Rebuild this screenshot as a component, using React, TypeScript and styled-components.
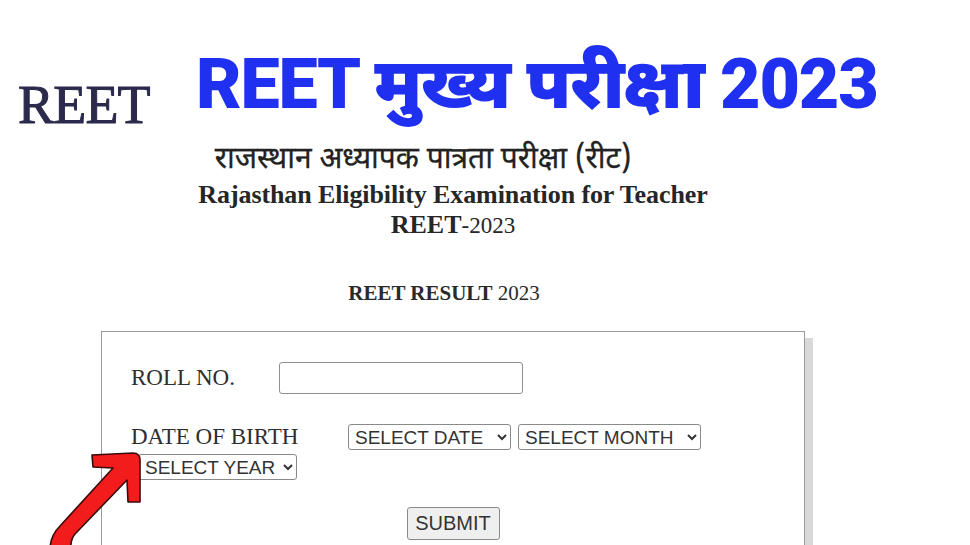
import React from "react";
import styled, { createGlobalStyle } from "styled-components";

const GlobalStyle = createGlobalStyle`
  html, body {
    margin: 0;
    padding: 0;
    background: #ffffff;
  }
  #root {
    width: 970px;
    height: 545px;
    overflow: hidden;
  }
`;

const Page = styled.div`
  position: relative;
  width: 970px;
  height: 545px;
  overflow: hidden;
  background: #fff;
`;

const Header = styled.header`
  display: flex;
  align-items: center;
  box-sizing: border-box;
  height: 140px;
  padding: 40px 0 0 18px;
`;

const Logo = styled.div`
  width: 178px;
  font-family: "Liberation Serif", serif;
  font-size: 54px;
  color: #2b2a4c;
  -webkit-text-stroke: 1px #2b2a4c;
  letter-spacing: -0.8px;
  padding-top: 30px;
`;

const Title = styled.h1`
  margin: 0;
  font-family: Roboto, "Noto Sans Devanagari", "Noto Sans", sans-serif;
  font-weight: 900;
  font-size: 70px;
  letter-spacing: -1.2px;
  color: #1f30f0;
  white-space: nowrap;
`;

const Intro = styled.div`
  width: 704px;
  margin-left: 101px;
  display: flex;
  flex-direction: column;
  align-items: center;
`;

const HindiLine = styled.div`
  margin: 2px 60px 0 0;
  font-family: "Noto Sans Devanagari", "Noto Sans", sans-serif;
  font-size: 30px;
  line-height: 38px;
  color: #222;
  -webkit-text-stroke: 0.3px #222;
`;

const EnglishLine = styled.div`
  margin-top: 1px;
  font-family: "Liberation Serif", serif;
  font-weight: bold;
  font-size: 26px;
  line-height: 28px;
  letter-spacing: -0.1px;
  color: #262626;
`;

const YearLine = styled.div`
  font-family: "Liberation Serif", serif;
  font-size: 26px;
  line-height: 32px;
  color: #262626;
  & > b {
    font-weight: bold;
  }
  & > span {
    font-size: 23px;
  }
`;

const ResultHeading = styled.div`
  margin: 39px 18px 0 0;
  font-family: "Liberation Serif", serif;
  font-size: 21px;
  color: #2a2a2a;
  & > b {
    font-weight: bold;
  }
`;

const FormBox = styled.form`
  margin: 25px 0 0 101px;
  width: 704px;
  min-height: 260px;
  border: 1px solid #9a9a9a;
  box-shadow: 8px 7px 0 #d9d9d9;
  padding: 30px 0 0 29px;
  box-sizing: border-box;
`;

const Row = styled.div<{ $gap?: number }>`
  display: flex;
  flex-wrap: wrap;
  align-items: center;
  column-gap: 7px;
  row-gap: 4px;
  margin-bottom: ${(p) => p.$gap ?? 0}px;
`;

const Label = styled.label<{ $width: number }>`
  width: ${(p) => p.$width}px;
  font-family: "Liberation Serif", serif;
  font-size: 23px;
  color: #2e2e2e;
  margin-right: -7px;
`;

const TextInput = styled.input`
  width: 244px;
  height: 32px;
  box-sizing: border-box;
  border: 1px solid #909090;
  border-radius: 3px;
  background: #fff;
`;

const Select = styled.select<{ $width: number; $indent?: number }>`
  width: ${(p) => p.$width}px;
  height: 26px;
  margin-left: ${(p) => p.$indent ?? 0}px;
  box-sizing: border-box;
  font-family: "Liberation Sans", Arial, sans-serif;
  font-size: 19px;
  color: #333;
  border: 1px solid #8a8a8a;
  border-radius: 3px;
  background: #fff;
  padding: 0 2px;
`;

const ButtonRow = styled.div`
  display: flex;
  justify-content: center;
  margin: 27px 29px 0 0;
`;

const SubmitButton = styled.button`
  width: 93px;
  height: 33px;
  font-family: "Liberation Sans", Arial, sans-serif;
  font-size: 20px;
  color: #333;
  background: #efefef;
  border: 1px solid #8a8a8a;
  border-radius: 3px;
`;

const Arrow = styled.svg`
  position: absolute;
  left: 0;
  top: 0;
  pointer-events: none;
`;

export default function App() {
  return (
    <Page>
      <GlobalStyle />
      <Header>
        <Logo>REET</Logo>
        <Title>REET मुख्य परीक्षा 2023</Title>
      </Header>
      <Intro>
        <HindiLine>राजस्थान अध्यापक पात्रता परीक्षा (रीट)</HindiLine>
        <EnglishLine>Rajasthan Eligibility Examination for Teacher</EnglishLine>
        <YearLine>
          <b>REET</b>
          <span>-2023</span>
        </YearLine>
      </Intro>
      <Intro>
        <ResultHeading>
          <b>REET RESULT</b> 2023
        </ResultHeading>
      </Intro>
      <FormBox onSubmit={(e) => e.preventDefault()}>
        <Row $gap={30}>
          <Label $width={148}>ROLL NO.</Label>
          <TextInput type="text" />
        </Row>
        <Row>
          <Label $width={217}>DATE OF BIRTH</Label>
          <Select $width={163}>
            <option>SELECT DATE</option>
          </Select>
          <Select $width={183}>
            <option>SELECT MONTH</option>
          </Select>
          <Select $width={159} $indent={7}>
            <option>SELECT YEAR</option>
          </Select>
        </Row>
        <ButtonRow>
          <SubmitButton type="submit">SUBMIT</SubmitButton>
        </ButtonRow>
      </FormBox>
      <Arrow width="970" height="545" viewBox="0 0 970 545">
        <path
          d="M92 455 L133 453 Q140 453 140 460 L140 502 L128 502 L127 480 L75 534 Q70 540 71 550 L50 550 Q50 536 60 526 L113 468 L93 467 Z"
          fill="#f21c1c"
          stroke="#3a0a0a"
          strokeWidth="1.6"
          strokeLinejoin="round"
        />
      </Arrow>
    </Page>
  );
}
